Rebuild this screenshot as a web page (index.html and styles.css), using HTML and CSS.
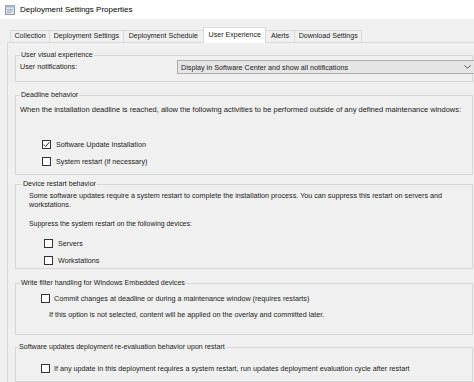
FILE: index.html
```html
<!DOCTYPE html>
<html lang="en">
<head>
<meta charset="utf-8">
<title>Deployment Settings Properties</title>
<link rel="stylesheet" href="styles.css">
</head>
<body>
<div class="window">
  <div class="titlebar">
    <svg class="appicon" width="10" height="10" viewBox="0 0 10 10">
      <rect x="0.5" y="0.5" width="9" height="9" fill="#dde5ee" stroke="#8d99a6"/>
      <rect x="0.5" y="0.5" width="9" height="2" fill="#a9bacb"/>
      <path d="M2 4.5h6M2 6h6M2 7.5h4" stroke="#9aa7b4" stroke-width="0.8"/>
    </svg>
    <span class="title">Deployment Settings Properties</span>
  </div>
  <div class="tabs">
    <div class="tab">Collection</div>
    <div class="tab">Deployment Settings</div>
    <div class="tab wide">Deployment Schedule</div>
    <div class="tab active">User Experience</div>
    <div class="tab alerts">Alerts</div>
    <div class="tab">Download Settings</div>
  </div>
  <div class="panel">
    <fieldset class="group g1">
      <legend>User visual experience</legend>
      <div class="notify-row">
        <span class="notify-label">User notifications:</span>
        <div class="combo">
          <span class="combo-text">Display in Software Center and show all notifications</span>
          <svg class="chev" width="7" height="4" viewBox="0 0 7 4"><path d="M0.5 0.5 L3.5 3.2 L6.5 0.5" fill="none" stroke="#444" stroke-width="0.9"/></svg>
        </div>
      </div>
    </fieldset>

    <fieldset class="group g2">
      <legend>Deadline behavior</legend>
      <p class="text when">When the installation deadline is reached, allow the following activities to be performed outside of any defined maintenance windows:</p>
      <div class="check c-first">
        <span class="box checked"><svg width="7" height="7" viewBox="0 0 7 7"><path d="M0.8 3.6 L2.7 5.5 L6.3 1.2" fill="none" stroke="#222" stroke-width="1"/></svg></span>
        <span>Software Update Installation</span>
      </div>
      <div class="check c-next">
        <span class="box"></span>
        <span>System restart (if necessary)</span>
      </div>
    </fieldset>

    <fieldset class="group g3">
      <legend>Device restart behavior</legend>
      <p class="text some">Some software updates require a system restart to complete the installation process. You can suppress this restart on servers and<br>workstations.</p>
      <p class="text suppress">Suppress the system restart on the following devices:</p>
      <div class="check c-servers">
        <span class="box"></span>
        <span>Servers</span>
      </div>
      <div class="check c-ws">
        <span class="box"></span>
        <span>Workstations</span>
      </div>
    </fieldset>

    <fieldset class="group g4">
      <legend>Write filter handling for Windows Embedded devices</legend>
      <div class="check c-commit">
        <span class="box"></span>
        <span>Commit changes at deadline or during a maintenance window (requires restarts)</span>
      </div>
      <p class="text ifthis">If this option is not selected, content will be applied on the overlay and committed later.</p>
    </fieldset>

    <fieldset class="group g5">
      <legend>Software updates deployment re-evaluation behavior upon restart</legend>
      <div class="check c-reeval">
        <span class="box"></span>
        <span>If any update in this deployment requires a system restart, run updates deployment evaluation cycle after restart</span>
      </div>
    </fieldset>
  </div>
</div>
</body>
</html>
```

FILE: styles.css
```css
html, body {
  margin: 0;
  padding: 0;
}
body {
  width: 474px;
  height: 382px;
  overflow: hidden;
  background: #f0f0f0;
  font-family: "Liberation Sans", Arial, sans-serif;
  font-size: 7.2px;
  line-height: 9px;
  color: #1a1a1a;
}
.window {
  width: 474px;
  height: 382px;
}
.titlebar {
  height: 19px;
  background: #ffffff;
  display: flex;
  align-items: center;
  padding-left: 5px;
  gap: 5px;
}
.appicon {
  display: block;
  flex: none;
}
.title {
  font-size: 8px;
  color: #000;
}
.tabs {
  height: 23px;
  display: flex;
  align-items: flex-end;
  padding-left: 10px;
  position: relative;
  z-index: 1;
}
.tab {
  height: 12px;
  box-sizing: border-box;
  border: 1px solid #d9d9d9;
  border-bottom: none;
  margin-left: -1px;
  padding: 0 3.5px;
  font-size: 7.1px;
  line-height: 11px;
  background: #f0f0f0;
  white-space: nowrap;
}
.tab:first-child {
  margin-left: 0;
}
.tab.wide {
  padding: 0 5px 0 5px;
}
.tab.alerts {
  padding: 0 5px;
}
.tab.active {
  height: 16px;
  margin-bottom: -1px;
  background: #ffffff;
  padding: 0 4px 0 4.5px;
  line-height: 15px;
}
.panel {
  margin-left: 7px;
  width: 480px;
  height: 345px;
  border: 1px solid #d9d9d9;
  border-right: none;
  padding: 8px 0 0 7px;
  box-sizing: border-box;
}
.group {
  margin: 0;
  width: 458px;
  box-sizing: border-box;
  border: 1px solid #d6d6d6;
  padding: 0 0 0 4px;
  min-width: 0;
}
.group legend {
  padding: 0 1px;
  margin-left: 0;
  line-height: 9px;
  font-size: 7.1px;
}
.text {
  margin: 0;
  white-space: nowrap;
}
.check {
  display: flex;
  align-items: center;
  height: 9px;
  gap: 5px;
  white-space: nowrap;
}
.box {
  width: 9px;
  height: 9px;
  box-sizing: border-box;
  border: 1px solid #333;
  background: #ffffff;
  display: flex;
  align-items: center;
  justify-content: center;
  flex: none;
}
.box svg {
  display: block;
}

/* group 1 */
.g1 {
  padding-bottom: 7px;
}
.notify-row {
  display: flex;
  align-items: center;
  height: 14px;
}
.notify-label {
  width: 157px;
  flex: none;
  position: relative;
  top: -1px;
}
.combo {
  width: 303px;
  height: 14px;
  box-sizing: border-box;
  border: 1px solid #adadad;
  background: #e5e5e5;
  display: flex;
  align-items: center;
  padding: 0 8px 0 3px;
  flex: none;
}
.combo-text {
  font-size: 7.2px;
  white-space: nowrap;
}
.chev {
  margin-left: auto;
  display: block;
}

/* group 2 */
.g2 {
  margin-top: 9px;
  padding-bottom: 8px;
}
.when {
  margin-top: 5px;
  font-size: 7.5px;
}
.c-first {
  margin-top: 26px;
  margin-left: 22px;
}
.c-next {
  margin-top: 8px;
  margin-left: 22px;
}

/* group 3 */
.g3 {
  margin-top: 5px;
  padding-bottom: 3px;
}
.g3 legend {
  margin-left: 2px;
}
.some {
  margin-top: 2px;
  margin-left: 9px;
}
.suppress {
  margin-top: 10px;
  margin-left: 9px;
  font-size: 6.9px;
}
.c-servers {
  margin-top: 11px;
  margin-left: 24px;
}
.c-ws {
  margin-top: 8px;
  margin-left: 24px;
}

/* group 4 */
.g4 {
  margin-top: 10px;
  padding-bottom: 15px;
}
.c-commit {
  margin-top: 6px;
  margin-left: 21px;
  gap: 4px;
}
.ifthis {
  margin-top: 7px;
  margin-left: 29px;
}

/* group 5 */
.g5 {
  margin-top: 8px;
  padding-bottom: 8px;
}
.g5 legend {
  margin-left: -2px;
}
.c-reeval {
  margin-top: 12px;
  margin-left: 21px;
  gap: 4px;
}
```
